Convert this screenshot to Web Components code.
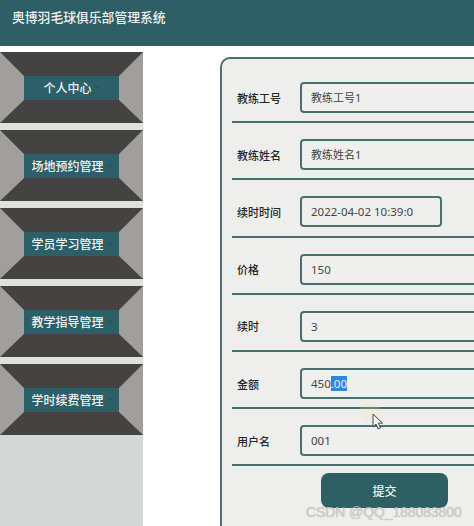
<!DOCTYPE html>
<html lang="zh">
<head>
<meta charset="utf-8">
<title>奥博羽毛球俱乐部管理系统</title>
<style>
  html, body { margin: 0; height: 100%; overflow: hidden; background: #fff; }
  body { font-family: "Noto Sans", "Noto Sans CJK SC", sans-serif; }
</style>
</head>
<body>
<app-shell>
  <span slot="title">奥博羽毛球俱乐部管理系统</span>
  <side-item slot="menu">个人中心</side-item>
  <side-item slot="menu">场地预约管理</side-item>
  <side-item slot="menu">学员学习管理</side-item>
  <side-item slot="menu">教学指导管理</side-item>
  <side-item slot="menu">学时续费管理</side-item>
  <form-row label="教练工号" value="教练工号1"></form-row>
  <form-row label="教练姓名" value="教练姓名1"></form-row>
  <form-row label="续时时间" value="2022-04-02 10:39:0" narrow></form-row>
  <form-row label="价格" value="150"></form-row>
  <form-row label="续时" value="3"></form-row>
  <form-row label="金额" value="450" selected=".00"></form-row>
  <form-row label="用户名" value="001"></form-row>
  <submit-button>提交</submit-button>
</app-shell>

<script>
class AppShell extends HTMLElement {
  constructor() {
    super();
    this.shadowDOM = this.attachShadow({mode: 'open'});
    this.shadowDOM.innerHTML = `
    <style>
      :host { display: block; height: 526px; position: relative; overflow: hidden; color: #333; }
      header {
        height: 46px;
        box-sizing: border-box;
        padding: 7px 0 0 12px;
        background: #2e5f66;
        color: #eef2f1;
        font-size: 12.800px;
        font-weight: 500;
        line-height: 20px;
      }
      .body { display: grid; grid-template-columns: 143px 1fr; height: 480px; }
      nav {
        margin-top: 6px;
        background: #d4d8d6;
        display: flex;
        flex-direction: column;
        align-items: stretch;
      }
      main { padding: 11px 0 0 77px; overflow: hidden; }
      .card {
        width: 340px;
        height: 480px;
        box-sizing: border-box;
        padding: 7px 0 0 10px;
        background: #eeeeec;
        border: 2px solid #47716f;
        border-radius: 10px;
      }
      .mark {
        position: absolute;
        left: 306px;
        top: 503px;
        font: 14px/18px "Liberation Sans", sans-serif;
        letter-spacing: -.1px;
        color: rgba(205, 210, 210, .75);
        text-shadow: 0 0 1px rgba(70, 70, 70, .35);
      }
      .halo {
        position: absolute;
        left: 360px;
        top: 402px;
        width: 20px;
        height: 20px;
        border-radius: 50%;
        background: rgba(245, 225, 165, .2);
      }
      svg { position: absolute; left: 372px; top: 413px; }
    </style>
    <header><slot name="title"></slot></header>
    <div class="body">
      <nav><slot name="menu"></slot></nav>
      <main><div class="card"><slot></slot></div></main>
    </div>
    <div class="halo"></div>
    <svg width="12" height="18" viewBox="0 0 12 18">
      <path d="M1 1v13l3-3 2.2 5 2.3-1-2.2-4.800h4.200z" fill="#f4f6f6" stroke="#3c4a4c" stroke-width="1"/>
    </svg>
    <div class="mark">CSDN @QQ_188083800</div>
    `;
  }
}
customElements.define('app-shell', AppShell);

class SideItem extends HTMLElement {
  constructor() {
    super();
    this.shadowDOM = this.attachShadow({mode: 'open'});
    this.shadowDOM.innerHTML = `
    <style>
      :host {
        display: block;
        box-sizing: border-box;
        height: 78px;
        padding-bottom: 7px;
        background: #e0e0dc;
      }
      :host(:last-of-type) { background: transparent; }
      .item {
        box-sizing: border-box;
        height: 71px;
        border-style: solid;
        border-width: 24px 24px 23px;
        border-color: #444341 #a09f9d;
        background: #2c5f68;
        color: #f0f3f2;
        font-size: 12px;
        font-weight: 500;
        display: flex;
        align-items: center;
        justify-content: center;
        gap: 4px;
      }
      i {
        width: 0;
        height: 0;
        margin-top: -1px;
        border: 2.500px solid transparent;
        border-top-color: #23505a;
        border-bottom: 0;
      }
    </style>
    <div class="item"><span><slot></slot></span><i></i></div>
    `;
  }
}
customElements.define('side-item', SideItem);

class FormRow extends HTMLElement {
  constructor() {
    super();
    this.shadowDOM = this.attachShadow({mode: 'open'});
  }

  connectedCallback() {
    const value = this.getAttribute('value');
    const picked = this.getAttribute('selected');
    // the CJK values sit a little smaller than the digits in the reference
    const size = /[^\x00-\x7f]/.test(value) ? '11px' : '11.5px';
    this.shadowDOM.innerHTML = `
    <style>
      :host {
        display: flex;
        align-items: center;
        box-sizing: border-box;
        height: 57.200px;
        padding-top: 8px;
        border-bottom: 2px solid #47716f;
        font-size: 11px;
        color: #262626;
      }
      label { width: 68px; padding-left: 5px; box-sizing: border-box; flex: none; font-weight: 500; }
      .input {
        box-sizing: border-box;
        width: 260px;
        height: 31px;
        padding-left: 9px;
        line-height: 27px;
        border: 2px solid #47716f;
        border-radius: 4px;
        background: #efefed;
        font-size: ${size};
        color: #444;
      }
      :host([narrow]) .input { width: 142px; }
      mark { background: #2f86e0; color: #e8f2fb; }
    </style>
    <label>${this.getAttribute('label')}</label>
    <div class="input">${value}${picked ? `<mark>${picked}</mark>` : ''}</div>
    `;
  }
}
customElements.define('form-row', FormRow);

class SubmitButton extends HTMLElement {
  constructor() {
    super();
    this.shadowDOM = this.attachShadow({mode: 'open'});
    this.shadowDOM.innerHTML = `
    <style>
      :host { display: block; padding: 7px 0 0 89px; }
      button {
        display: block;
        width: 127px;
        height: 35px;
        padding: 0;
        border: 0;
        border-radius: 8px;
        background: #2d6063;
        color: #eef2f1;
        font: inherit;
        font-size: 12px;
        font-weight: 500;
      }
    </style>
    <button type="button"><slot></slot></button>
    `;
  }
}
customElements.define('submit-button', SubmitButton);
</script>
</body>
</html>
